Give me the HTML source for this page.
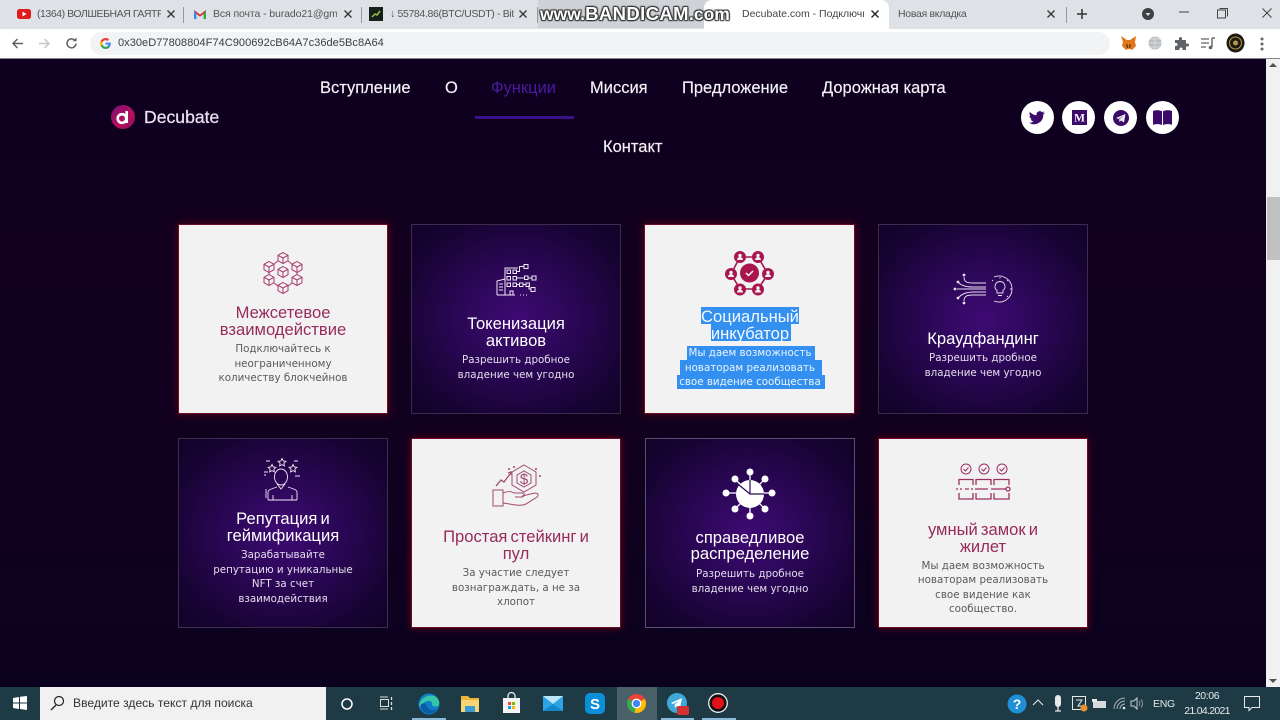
<!DOCTYPE html>
<html lang="ru"><head><meta charset="utf-8"><title>Decubate</title>
<style>
*{box-sizing:border-box}
html,body{margin:0;padding:0;width:1280px;height:720px;overflow:hidden;background:#10001f;font-family:"Liberation Sans","Noto Sans CJK SC",sans-serif}
.a{position:absolute}
.tab{position:absolute;top:8px;font-size:10.5px;line-height:13px;color:#555;white-space:nowrap;overflow:hidden}
.sep{position:absolute;top:7px;width:1px;height:16px;background:#999}
.nav{position:absolute;font-size:16.5px;line-height:20px;color:#f4f4f8;white-space:nowrap;-webkit-text-stroke:.15px #f4f4f8}
.soc{position:absolute;top:101px;width:33px;height:33px;border-radius:50%;background:#fff}
.card{position:absolute}
.l{background:#f2f2f2;box-shadow:0 0 0 1px #6e0c28,0 0 7px 2px #4c0016}
.d{background:radial-gradient(ellipse at 50% 50%,#3e0a74 0%,#2a0755 40%,#170333 78%,#120228 100%);border:1.5px solid #3a2d4e}
.col{position:absolute;top:0;width:300px;height:0;text-align:center}
.ti,.de{position:absolute;left:0;width:300px;white-space:nowrap;text-align:center}
.ti{font-size:16.6px;line-height:18px;word-spacing:-1.5px;margin-top:1px}
.de{font-family:"DejaVu Sans",sans-serif;font-size:10.3px;line-height:14px;margin-top:1px}
.lt .ti{color:#982b5c}.lt .de{color:#5a5a5a}
.dk .ti{color:#fff}.dk .de{color:#e4dcec}
.hl{position:absolute;background:#3390f0}
svg{position:absolute;overflow:visible}
</style></head><body>

<!-- page -->
<div class="a" style="left:0;top:59px;width:1266px;height:628px;background:linear-gradient(180deg,#0e001f 0%,#13001f 30%,#10011f 70%,#0b0220 100%)"></div>

<!-- tab strip -->
<div class="a" style="left:0;top:0;width:1280px;height:29px;background:#dee1e6"></div>
<div class="a" style="left:538px;top:0;width:172px;height:28px;background:#cfd2d7"></div>
<svg style="left:17px;top:9px" width="14" height="10"><rect width="14" height="10" rx="2.500" fill="#e01b1b"/><path d="M5.500 2.500v5l4-2.500z" fill="#fff"/></svg>
<div class="tab" style="left:37px;width:124px;letter-spacing:-.45px">(1364) ВОЛШЕБНАЯ ГАЯТРІ</div>
<svg style="left:167px;top:10px" width="8" height="8"><path d="M.5.5l7 7M7.500.5l-7 7" stroke="#333" stroke-width="1.300"/></svg>
<div class="sep" style="left:183px"></div>
<svg style="left:194px;top:9px" width="12" height="10"><path d="M0 10V1l6 4.500L12 1v9h-2.500V5L6 7.800 2.500 5v5z" fill="#d93025"/><path d="M9.500 10V5L12 1v9z" fill="#34a853"/><path d="M0 10V1l2.500 4v5z" fill="#4285f4"/></svg>
<div class="tab" style="left:213px;width:124px;letter-spacing:-.1px">Вся почта - burado21@gm</div>
<svg style="left:344px;top:10px" width="8" height="8"><path d="M.5.5l7 7M7.500.5l-7 7" stroke="#333" stroke-width="1.300"/></svg>
<div class="sep" style="left:361px"></div>
<svg style="left:369px;top:7px" width="14" height="14"><rect width="14" height="14" fill="#14201a"/><path d="M3 10l3-3 2 1 3-4" stroke="#9fc23a" stroke-width="1.500" fill="none"/></svg>
<div class="tab" style="left:390px;width:124px;letter-spacing:-.35px">↓ 55784.86(BTC/USDT) - Bity</div>
<svg style="left:519px;top:10px" width="8" height="8"><path d="M.5.5l7 7M7.500.5l-7 7" stroke="#333" stroke-width="1.300"/></svg>
<div class="sep" style="left:537px"></div>
<!-- active tab -->
<div class="a" style="left:704px;top:0;width:185px;height:30px;background:#fff;border-radius:8px 8px 0 0"></div>
<div class="tab" style="left:742px;width:122px;color:#444">Decubate.com - Подключи</div>
<svg style="left:871px;top:10px" width="8" height="8"><path d="M.5.5l7 7M7.500.5l-7 7" stroke="#222" stroke-width="1.400"/></svg>
<div class="tab" style="left:898px;width:120px;letter-spacing:-.3px">Новая вкладка</div>
<svg style="left:1047px;top:10px" width="8" height="8"><path d="M.5.5l7 7M7.500.5l-7 7" stroke="#333" stroke-width="1.300"/></svg>
<div class="sep" style="left:1066px"></div>
<svg style="left:1076px;top:8px" width="12" height="12"><path d="M6 1v10M1 6h10" stroke="#333" stroke-width="1.500"/></svg>
<svg style="left:1142px;top:8px" width="12" height="12"><circle cx="6" cy="6" r="6" fill="#3c4043"/><path d="M3.500 5h5L6 8z" fill="#dee1e6"/></svg>
<svg style="left:1179px;top:8px" width="11" height="12"><path d="M0 4h10" stroke="#444" stroke-width="1"/></svg>
<svg style="left:1217px;top:8px" width="11" height="11"><rect x=".5" y="2" width="8" height="8" fill="none" stroke="#444"/><path d="M2.500 .5h8v8" fill="none" stroke="#444"/></svg>
<svg style="left:1262px;top:8px" width="11" height="11"><path d="M.5.5l9 9M9.500.5l-9 9" stroke="#444"/></svg>

<!-- toolbar -->
<div class="a" style="left:0;top:29px;width:1280px;height:29px;background:#fff"></div>
<div class="a" style="left:0;top:58px;width:1280px;height:1px;background:#8a8494"></div>
<svg style="left:11px;top:37px" width="13" height="13"><path d="M12 6.500H2M6.500 2L2 6.500 6.500 11" fill="none" stroke="#5f6368" stroke-width="1.500"/></svg>
<svg style="left:38px;top:37px" width="13" height="13"><path d="M1 6.500h10M6.500 2L11 6.500 6.500 11" fill="none" stroke="#c4c7cb" stroke-width="1.500"/></svg>
<svg style="left:65px;top:37px" width="13" height="13"><path d="M11 6.500A4.500 4.500 0 1 1 9.500 3" fill="none" stroke="#5f6368" stroke-width="1.500"/><path d="M7.500 4.200h4V.5z" fill="#5f6368"/></svg>
<div class="a" style="left:90px;top:32px;width:1020px;height:23px;border-radius:11.500px;background:#f1f3f4"></div>
<svg style="left:100px;top:38px" width="11" height="11" viewBox="0 0 11 11"><path d="M10.800 5.600c0-.4 0-.7-.1-1H5.500v2h3c-.1.700-.5 1.200-1.100 1.600v1.300h1.800c1-1 1.600-2.300 1.600-3.900z" fill="#4285f4"/><path d="M5.500 11c1.500 0 2.700-.5 3.700-1.400L7.400 8.200c-.5.300-1.100.5-1.900.5-1.400 0-2.700-1-3.100-2.300H.6v1.400C1.500 9.700 3.400 11 5.500 11z" fill="#34a853"/><path d="M2.400 6.400a3.200 3.200 0 0 1 0-2V3H.6a5.500 5.500 0 0 0 0 5z" fill="#fbbc05"/><path d="M5.500 2.200c.8 0 1.500.3 2.100.8l1.600-1.600A5.500 5.500 0 0 0 .6 3l1.800 1.400c.4-1.300 1.700-2.200 3.100-2.200z" fill="#ea4335"/></svg>
<div class="a" style="left:118px;top:36px;font-size:11.100px;line-height:15px;color:#3c4043;white-space:nowrap">0x30eD77808804F74C900692cB64A7c36de5Bc8A64</div>
<svg style="left:1121px;top:36px" width="15" height="14"><path d="M0 0l6 4h3l6-4-1 6 1 4-4 4-2-1H7l-2 1-4-4 1-4z" fill="#e2761b"/><path d="M5 8l2 1v3H6zM10 8L8 9v3h1z" fill="#5a3a1c"/></svg>
<svg style="left:1148px;top:36px" width="14" height="14"><circle cx="7" cy="7" r="6.500" fill="#b9bdc0"/><path d="M0 7h14M7 0v14M2 3h10M2 11h10" stroke="#e4e6e8" stroke-width=".7"/></svg>
<svg style="left:1175px;top:37px" width="13" height="13"><path d="M0 3h4V1.500a1.500 1.500 0 0 1 3 0V3h4v3.500h1.500a1.500 1.500 0 0 1 0 3H11V13H7.500v-1a1.500 1.500 0 0 0-3 0v1H0V9h1a1.500 1.500 0 0 0 0-3H0z" fill="#5f6368"/></svg>
<svg style="left:1201px;top:37px" width="14" height="13"><path d="M0 2h8M0 6h8M0 10h5" stroke="#5f6368" stroke-width="1.200"/><path d="M11 1v9" stroke="#5f6368" stroke-width="1.400"/><path d="M11 1h3" stroke="#5f6368" stroke-width="1.400"/><circle cx="9.500" cy="10.500" r="1.800" fill="#5f6368"/></svg>
<svg style="left:1226px;top:33px" width="19" height="20"><ellipse cx="9.500" cy="10" rx="9" ry="9.500" fill="#1e1a12"/><circle cx="9.500" cy="10" r="6" fill="none" stroke="#b59a4a"/><circle cx="9.500" cy="10" r="2.500" fill="#b59a4a"/></svg>
<svg style="left:1260px;top:37px" width="4" height="14"><circle cx="2" cy="2" r="1.500" fill="#5f6368"/><circle cx="2" cy="7" r="1.500" fill="#5f6368"/><circle cx="2" cy="12" r="1.500" fill="#5f6368"/></svg>

<!-- bandicam -->
<div class="a" style="left:540px;top:2px;width:200px;font-size:18.500px;line-height:23px;font-weight:bold;color:#fff;white-space:nowrap;text-shadow:0 0 1px #222,1px 1px 1px #333,-1px -1px 1px #333,1px -1px 1px #333,-1px 1px 1px #333"><span style="font-size:17.500px">www.</span><span style="letter-spacing:.4px">BANDICAM</span><span style="font-size:17.500px">.com</span></div>

<!-- scrollbar -->
<div class="a" style="left:1266px;top:59px;width:14px;height:628px;background:#f1f1f1"></div>
<div class="a" style="left:1267px;top:197px;width:13px;height:63px;background:#c1c1c1"></div>
<svg style="left:1269px;top:62px" width="8" height="6"><path d="M0 5l4-4 4 4z" fill="#505050"/></svg>
<svg style="left:1269px;top:678px" width="8" height="6"><path d="M0 1l4 4 4-4z" fill="#505050"/></svg>

<!-- header -->
<svg style="left:111px;top:105px" width="24" height="24"><defs><linearGradient id="lg" x1="0" y1="0" x2="1" y2="1"><stop offset="0" stop-color="#7a0f74"/><stop offset=".6" stop-color="#b80f5c"/><stop offset="1" stop-color="#80105f"/></linearGradient></defs><circle cx="12" cy="12" r="12" fill="url(#lg)"/><circle cx="11" cy="13.500" r="4.300" fill="none" stroke="#fff" stroke-width="2.600"/><path d="M15.700 6v12" stroke="#fff" stroke-width="2.600"/></svg>
<div class="a" style="left:144px;top:107px;font-size:17.600px;line-height:20px;color:#e8e2f0;white-space:nowrap;-webkit-text-stroke:.25px #e8e2f0">Decubate</div>

<div class="nav" style="left:320px;top:78px">Вступление</div>
<div class="nav" style="left:445px;top:78px">О</div>
<div class="nav" style="left:491px;top:78px;color:#4a1a9e;-webkit-text-stroke:0">Функции</div>
<div class="a" style="left:475px;top:116px;width:99px;height:2.500px;background:#3b108a"></div>
<div class="nav" style="left:590px;top:78px">Миссия</div>
<div class="nav" style="left:682px;top:78px">Предложение</div>
<div class="nav" style="left:822px;top:78px">Дорожная карта</div>
<div class="nav" style="left:603px;top:137px">Контакт</div>

<div class="soc" style="left:1021px"></div><div class="soc" style="left:1062px"></div><div class="soc" style="left:1104px"></div><div class="soc" style="left:1146px"></div>
<svg style="left:1029px;top:110px" width="16" height="15" viewBox="0 0 24 22"><path d="M23.500 3.800c-.9.400-1.800.6-2.800.8 1-.6 1.800-1.500 2.100-2.700-.9.600-2 1-3.100 1.200A4.900 4.900 0 0 0 11.400 7.600C7.400 7.400 3.800 5.500 1.400 2.500c-1.300 2.200-.6 5.100 1.500 6.500-.8 0-1.500-.2-2.200-.6 0 2.300 1.600 4.400 3.900 4.900-.7.200-1.500.2-2.200.1.600 2 2.400 3.400 4.600 3.400A9.900 9.900 0 0 1 0 18.900 14 14 0 0 0 21.500 6.500c1-.7 1.800-1.600 2-2.700z" fill="#3c0a68"/></svg>
<svg style="left:1072px;top:110px" width="15" height="15"><rect width="15" height="15" fill="#3c0a68"/><text x="7.500" y="11.500" font-family="Liberation Serif,serif" font-weight="bold" font-size="11.500" fill="#fff" text-anchor="middle">M</text></svg>
<svg style="left:1113px;top:110px" width="16" height="16"><circle cx="8" cy="8" r="8" fill="#3c0a68"/><path d="M3 8l9.500-4-1.500 8.500-3-2-1.500 1.500-.4-2.600L11 5.500 5.500 9z" fill="#eee"/></svg>
<svg style="left:1153px;top:110px" width="19" height="15"><path d="M0 1C3 0 6.500 0 9 1.300V15C6.500 13.800 3 13.800 0 14.800zM19 1C16 0 12.500 0 10 1.300V15c2.500-1.200 6-1.200 9-.2z" fill="#3c0a68"/></svg>

<!-- cards -->
<div class="card l" style="left:179px;top:225px;width:208px;height:188px"></div>
<div class="card d" style="left:411px;top:224px;width:210px;height:190px"></div>
<div class="card l" style="left:645px;top:225px;width:209px;height:188px"></div>
<div class="card d" style="left:878px;top:224px;width:210px;height:190px"></div>
<div class="card d" style="left:178px;top:438px;width:210px;height:190px"></div>
<div class="card l" style="left:412px;top:439px;width:208px;height:188px"></div>
<div class="card d" style="left:645px;top:438px;width:210px;height:190px;border-color:#5a4f70"></div>
<div class="card l" style="left:879px;top:439px;width:208px;height:188px"></div>

<!-- selection -->
<div class="hl" style="left:701px;top:307px;width:98px;height:17px"></div>
<div class="hl" style="left:711px;top:324px;width:80px;height:17px"></div>
<div class="hl" style="left:687px;top:346px;width:128px;height:15px"></div>
<div class="hl" style="left:680px;top:360px;width:142px;height:15px"></div>
<div class="hl" style="left:677px;top:375px;width:148px;height:14px"></div>

<!-- text -->
<div class="col lt" style="left:133px">
<div class="ti" style="top:303px">Межсетевое</div><div class="ti" style="top:320px">взаимодействие</div>
<div class="de" style="top:341px">Подключайтесь к</div><div class="de" style="top:356px">неограниченному</div><div class="de" style="top:370px">количеству блокчейнов</div>
</div>
<div class="col dk" style="left:366px">
<div class="ti" style="top:314px">Токенизация</div><div class="ti" style="top:331px">активов</div>
<div class="de" style="top:352px">Разрешить дробное</div><div class="de" style="top:367px">владение чем угодно</div>
</div>
<div class="col" style="left:600px">
<div class="ti" style="top:307px;color:#f4f9ff">Социальный</div><div class="ti" style="top:324px;color:#f4f9ff">инкубатор</div>
<div class="de" style="top:345px;color:#eaf3ff">Мы даем возможность</div><div class="de" style="top:360px;color:#eaf3ff">новаторам реализовать</div><div class="de" style="top:374px;color:#eaf3ff">свое видение сообщества</div>
</div>
<div class="col dk" style="left:833px">
<div class="ti" style="top:329px">Краудфандинг</div>
<div class="de" style="top:350px">Разрешить дробное</div><div class="de" style="top:365px">владение чем угодно</div>
</div>
<div class="col dk" style="left:133px">
<div class="ti" style="top:509px">Репутация и</div><div class="ti" style="top:526px">геймификация</div>
<div class="de" style="top:547px">Зарабатывайте</div><div class="de" style="top:562px">репутацию и уникальные</div><div class="de" style="top:576px">NFT за счет</div><div class="de" style="top:591px">взаимодействия</div>
</div>
<div class="col lt" style="left:366px">
<div class="ti" style="top:527px">Простая стейкинг и</div><div class="ti" style="top:544px">пул</div>
<div class="de" style="top:565px">За участие следует</div><div class="de" style="top:580px">вознаграждать, а не за</div><div class="de" style="top:594px">хлопот</div>
</div>
<div class="col dk" style="left:600px">
<div class="ti" style="top:528px">справедливое</div><div class="ti" style="top:544px">распределение</div>
<div class="de" style="top:566px">Разрешить дробное</div><div class="de" style="top:581px">владение чем угодно</div>
</div>
<div class="col lt" style="left:833px">
<div class="ti" style="top:520px">умный замок и</div><div class="ti" style="top:537px">жилет</div>
<div class="de" style="top:558px">Мы даем возможность</div><div class="de" style="top:572px">новаторам реализовать</div><div class="de" style="top:587px">свое видение как</div><div class="de" style="top:601px">сообщество.</div>
</div>

<!-- icons -->
<svg style="left:0;top:0" width="1280" height="720" fill="none">
<defs><g id="cb" stroke="#a83a6c" stroke-width="1"><path d="M0-5.500L5-2.700v5.400L0 5.500-5 2.700v-5.400zM-5-2.700L0 0l5-2.700M0 0v5.500"/></g></defs>
<use href="#cb" x="283" y="258"/><use href="#cb" x="269" y="267"/><use href="#cb" x="297" y="267"/><use href="#cb" x="283" y="272"/><use href="#cb" x="269" y="280"/><use href="#cb" x="297" y="280"/><use href="#cb" x="283" y="288"/>
<path d="M269 272v3M297 272v3M274 283l4 3M292 283l-4 3M274 264l4-3M292 264l-4-3" stroke="#a83a6c"/>

<!-- 2 building -->
<g stroke="#efe8f5" stroke-width="1">
<path d="M497 295v-14l8-2M505 295v-27h13M497 295h18M520 295h1M523 295h1M526 295h1"/>
<path d="M499 284h4M499 287h4M499 290h4M510 295v-4h3v4"/>
<rect x="507" y="270" width="3.500" height="3.500"/><rect x="513" y="270" width="3.500" height="3.500"/><rect x="507" y="276.500" width="3.500" height="3.500"/><rect x="513" y="276.500" width="3.500" height="3.500"/><rect x="507" y="283" width="3.500" height="3.500"/><rect x="513" y="283" width="3.500" height="3.500"/>
<path d="M516.500 271.500h3v-5h4M516.500 278h8M528 278h4M516.500 284.500h3M523 284.500h3M529 285v4h2"/>
<rect x="524" y="264.500" width="4" height="4"/><rect x="524.500" y="276" width="3.500" height="3.500"/><rect x="532" y="276" width="4" height="4"/><rect x="519.500" y="283" width="3.500" height="3.500"/><rect x="526" y="283" width="3.500" height="3.500"/><rect x="531" y="287.500" width="4" height="4"/>
</g>

<!-- 3 social -->
<path d="M740 257h18L768 274 758 289H740L731 274z" stroke="#a8154f" stroke-width="1.600"/>
<circle cx="749.500" cy="273" r="9.500" fill="#a8154f"/>
<path d="M746 273l2.500 2.500 4.500-4.500" stroke="#fff" stroke-width="1.500"/>
<g fill="#a8154f"><circle cx="740" cy="257" r="6"/><circle cx="758" cy="257" r="6"/><circle cx="731" cy="274" r="6"/><circle cx="768" cy="274" r="6"/><circle cx="740" cy="289.500" r="6"/><circle cx="758" cy="289.500" r="6"/></g>
<g fill="#f2f2f2"><circle cx="740" cy="255.500" r="1.700"/><path d="M737 260a3 3 0 0 1 6 0z"/><circle cx="758" cy="255.500" r="1.700"/><path d="M755 260a3 3 0 0 1 6 0z"/><circle cx="731" cy="272.500" r="1.700"/><path d="M728 277a3 3 0 0 1 6 0z"/><circle cx="768" cy="272.500" r="1.700"/><path d="M765 277a3 3 0 0 1 6 0z"/><circle cx="740" cy="288" r="1.700"/><path d="M737 292.500a3 3 0 0 1 6 0z"/><circle cx="758" cy="288" r="1.700"/><path d="M755 292.500a3 3 0 0 1 6 0z"/></g>

<!-- 4 crowdfunding -->
<g stroke="#e8dff0" stroke-width=".9">
<path d="M964 277c0 5 3 6 9 6h13M959 283c3 3 7 4 14 4h13M957 289h29M959 297c3-3 7-5 14-5h13M964 301c0-5 3-6 9-6h13"/>
<path d="M994 277a13 13 0 1 1 0 24"/><path d="M1000 281.500a5 5 0 0 1 3 9v2.500h-6v-2.500a5 5 0 0 1 3-9zM998 295.500h4"/>
<path d="M1000 278.500v-1.500M993 281l-1-1M1007 281l1-1M1010 289h1.500M1007 296l1 1"/>
</g>
<g fill="#e8dff0"><circle cx="964" cy="275" r="1.400"/><circle cx="958" cy="282" r="1.400"/><circle cx="955" cy="289" r="1.400"/><circle cx="958" cy="298" r="1.400"/><circle cx="964" cy="303" r="1.400"/></g>

<!-- 5 reputation -->
<g stroke="#efe8f5" stroke-width=".9">
<path d="M272 464.500l1.200 2.500 2.700.3-2 1.900.5 2.700-2.400-1.300-2.400 1.300.5-2.700-2-1.900 2.700-.3z"/>
<path d="M282 458.500l1.200 2.500 2.700.3-2 1.900.5 2.700-2.400-1.300-2.400 1.300.5-2.700-2-1.900 2.700-.3z"/>
<path d="M293 464.500l1.200 2.500 2.700.3-2 1.900.5 2.700-2.400-1.300-2.400 1.300.5-2.700-2-1.900 2.700-.3z"/>
<ellipse cx="281" cy="477" rx="6.500" ry="8"/>
<path d="M277 484l4 5 4-5M268 500v-8c0-2 3-3 9-5M297 500v-8c0-2-3-3-9-5M268 500h29M273 495v5M292 495v5M266 489v9M264 472h4M295 476h5M266 461h4M294 461h4M264 475h2"/>
</g>

<!-- 6 staking -->
<g stroke="#a04a70" stroke-width="1">
<path d="M524 465l12 7v13l-12 7-12-7v-13zM517 475l7-4 7 4v8l-7 4-7-4z"/>
<path d="M496 486l5-6 3 2 6-8M508 473l3-1-.500 3" stroke-width="1.300"/>
<rect x="493" y="490" width="10" height="16"/>
<path d="M503 493c5-2 8-2 11 0h8c3 0 3 3 0 4h-7M522 496l13-3c3 0 4 2 2 4l-11 7c-7 3-14 0-23-1"/>
</g>
<text x="524" y="484" font-size="15" font-family="Liberation Sans,sans-serif" text-anchor="middle" fill="#a04a70">$</text>
<g fill="#a04a70"><circle cx="514" cy="467" r="1"/><circle cx="536" cy="469" r="1"/><circle cx="540" cy="476" r="1"/><circle cx="509" cy="469" r="1"/></g>

<!-- 7 pie -->
<g stroke="#fff" stroke-width="1.300"><path d="M750 472v22M735 479l15 15M765 479l-15 15M728 493h44M735 509l15-15M765 509l-15-15M750 516v-22"/></g>
<g fill="#fff"><circle cx="750" cy="472" r="3.500"/><circle cx="735" cy="479" r="3.500"/><circle cx="765" cy="479" r="3.500"/><circle cx="726" cy="493" r="3.500"/><circle cx="772" cy="493" r="3.500"/><circle cx="735" cy="509" r="3.500"/><circle cx="765" cy="509" r="3.500"/><circle cx="750" cy="516" r="3.500"/>
<circle cx="750" cy="494" r="14"/></g>
<path d="M750 480v14h14M739 485l11 9" stroke="#2b0757" stroke-width="1.200"/>

<!-- 8 lock -->
<g stroke="#9c3060" stroke-width="1">
<circle cx="966" cy="469" r="5"/><circle cx="984" cy="469" r="5"/><circle cx="1002" cy="469" r="5"/>
<path d="M963.500 469l2 2 3-3.500M981.500 469l2 2 3-3.500M999.500 469l2 2 3-3.500"/>
<g stroke-width="1.300"><path d="M959 485v-5.500h14v5.500M976 485v-5.500h15v5.500M994 485v-5.500h15v5.500"/>
<path d="M959 493v6h14v-6M976 493v6h15v-6M994 493v6h15v-6"/>
<path d="M956 489h2M960 489h2M965 489h4M971 489h2M975 489h13M991 489h15"/><circle cx="1008" cy="489" r="2"/></g>
</g>
</svg>

<!-- taskbar -->
<div class="a" style="left:0;top:687px;width:1280px;height:33px;background:#1d3a45"></div>
<svg style="left:13px;top:696px" width="14" height="14"><path d="M0 2l6-1v5.500H0zM7 .8L14 0v6.500H7zM0 7.500h6V13l-6-1zM7 7.500h7V14l-7-1z" fill="#fff"/></svg>
<div class="a" style="left:40px;top:687px;width:286px;height:33px;background:#f1f1f1"></div>
<svg style="left:50px;top:695px" width="15" height="16"><circle cx="9" cy="6" r="4.500" fill="none" stroke="#222" stroke-width="1.200"/><path d="M6 10l-5 5" stroke="#222" stroke-width="1.300"/></svg>
<div class="a" style="left:73px;top:696px;font-size:12.100px;line-height:15px;color:#333;white-space:nowrap">Введите здесь текст для поиска</div>
<svg style="left:341px;top:698px" width="12" height="12"><circle cx="6" cy="6" r="5" fill="none" stroke="#fff" stroke-width="1.500"/></svg>
<svg style="left:379px;top:696px" width="15" height="15"><path d="M1 1h8M1 13h8" stroke="#ddd"/><rect x="1.500" y="3.500" width="8" height="7" fill="none" stroke="#ddd"/><path d="M12.500 1v3M12.500 6v3M12.500 11v3" stroke="#ddd" stroke-width="1.300"/></svg>
<svg style="left:418px;top:693px" width="22" height="22"><circle cx="11" cy="11" r="10.500" fill="#0f7ec9"/><path d="M1 13C2 5 10 1 16 3c4 1.500 6 5 5 9-1 2-6 2-7 0 1-3-2-5-5-4-3 1-4 3-4 6z" fill="#35c6a8"/><path d="M8 11c1 5 6 8 11 5-3 5-9 6-13 3-3-2-4-5-3-8 1 0 4-2 5 0z" fill="#0a5ba8"/></svg>
<svg style="left:461px;top:695px" width="18" height="17"><path d="M0 1h7l2 2h9v4H0z" fill="#e9b53e"/><rect y="5" width="18" height="12" fill="#f8d572"/><rect x="4" y="11" width="10" height="6" fill="#3b9bd8"/></svg>
<svg style="left:503px;top:693px" width="17" height="20"><path d="M5 6V3a3.500 3.500 0 0 1 7 0v3" fill="none" stroke="#eee" stroke-width="1.300"/><rect y="5" width="17" height="15" fill="#f3f3f3"/><rect x="5" y="9" width="3" height="3" fill="#f25022"/><rect x="9" y="9" width="3" height="3" fill="#7fba00"/><rect x="5" y="13" width="3" height="3" fill="#00a4ef"/><rect x="9" y="13" width="3" height="3" fill="#ffb900"/></svg>
<svg style="left:543px;top:696px" width="20" height="15"><rect width="20" height="15" fill="#2ba3e6"/><path d="M0 0l10 8 10-8z" fill="#bce6fa"/><path d="M0 15l10-7 10 7z" fill="#1587c9"/></svg>
<svg style="left:585px;top:693px" width="20" height="21"><rect width="20" height="21" rx="5" fill="#0a8fd8"/><text x="10" y="16" font-size="15" font-weight="bold" font-family="Liberation Sans,sans-serif" fill="#fff" text-anchor="middle">S</text></svg>
<div class="a" style="left:617px;top:687px;width:40px;height:33px;background:#4a6068"></div>
<svg style="left:627px;top:694px" width="19" height="19" viewBox="0 0 20 20"><circle cx="10" cy="10" r="10" fill="#ea4335"/><path d="M10 10L1.300 5A10 10 0 0 0 8 19.800z" fill="#34a853"/><path d="M10 10l8.700-5A10 10 0 0 1 8 19.800z" fill="#fbbc05"/><circle cx="10" cy="10" r="4.500" fill="#4285f4" stroke="#fff" stroke-width="1.300"/></svg>
<svg style="left:667px;top:693px" width="23" height="23"><circle cx="10" cy="10" r="10" fill="#3ea8d8"/><path d="M4 10l11-5-2 10-3-2-2 2-.5-3.500 5-4-6.500 3.500z" fill="#fff"/><rect x="10" y="13" width="12" height="9" rx="2" fill="#d62f2f"/></svg>
<svg style="left:708px;top:693px" width="20" height="20"><circle cx="10" cy="10" r="9.300" fill="#111" stroke="#eee" stroke-width="1.300"/><circle cx="10" cy="10" r="6" fill="#e3101a"/></svg>
<div class="a" style="left:412px;top:718px;width:34px;height:2px;background:#8ab8d8"></div>
<div class="a" style="left:661px;top:718px;width:33px;height:2px;background:#8ab8d8"></div>
<div class="a" style="left:702px;top:718px;width:34px;height:2px;background:#8ab8d8"></div>
<svg style="left:1007px;top:694px" width="20" height="20"><circle cx="10" cy="10" r="9.500" fill="#1f8fd6"/><text x="10" y="15" font-size="14" font-weight="bold" font-family="Liberation Sans,sans-serif" fill="#fff" text-anchor="middle">?</text></svg>
<svg style="left:1032px;top:698px" width="12" height="9"><path d="M1 7l5-5 5 5" fill="none" stroke="#e4e8ea" stroke-width="1.100"/></svg>
<svg style="left:1053px;top:695px" width="10" height="18"><rect x="2" y="0" width="6" height="12" rx="3" fill="#e8e8e8"/><path d="M5 12v4M2 16h6" stroke="#e8e8e8" stroke-width="1.300"/></svg>
<svg style="left:1072px;top:696px" width="16" height="16"><rect x=".5" y=".5" width="13" height="13" fill="none" stroke="#e8e8e8"/><path d="M4 4h6l-4 6h4" fill="none" stroke="#e8e8e8"/><circle cx="12" cy="12" r="3.500" fill="#e8912d"/></svg>
<svg style="left:1092px;top:699px" width="14" height="10"><rect x="1" y="2" width="13" height="7" fill="#d6dadc"/><rect x="0" y="0" width="5" height="3" fill="#e8e8e8"/></svg>
<svg style="left:1113px;top:697px" width="13" height="13"><path d="M1 12a11 11 0 0 1 11-11M4 12a8 8 0 0 1 8-8M7 12a5 5 0 0 1 5-5" fill="none" stroke="#aab4b8"/><circle cx="11" cy="11" r="1.300" fill="#e8e8e8"/></svg>
<svg style="left:1130px;top:697px" width="14" height="13"><path d="M1 4h3l3-3v11L4 9H1z" fill="none" stroke="#c8d0d4"/><path d="M9 4c1 1 1 4 0 5M11 2.500c2 2 2 6 0 8" fill="none" stroke="#8a979c"/></svg>
<div class="a" style="left:1153px;top:698px;font-size:10.500px;line-height:13px;color:#e4e8ea;letter-spacing:-.3px">ENG</div>
<div class="a" style="left:1180px;top:689px;width:54px;text-align:center;font-size:10.500px;line-height:14px;color:#e8ecee;letter-spacing:-.4px">20:06</div>
<div class="a" style="left:1180px;top:704px;width:54px;text-align:center;font-size:10.500px;line-height:14px;color:#e8ecee;letter-spacing:-.7px">21.04.2021</div>
<svg style="left:1244px;top:696px" width="16" height="15"><path d="M.5.5h15v11H8l-3 3v-3H.5z" fill="none" stroke="#e8ecee"/></svg>
</body></html>
